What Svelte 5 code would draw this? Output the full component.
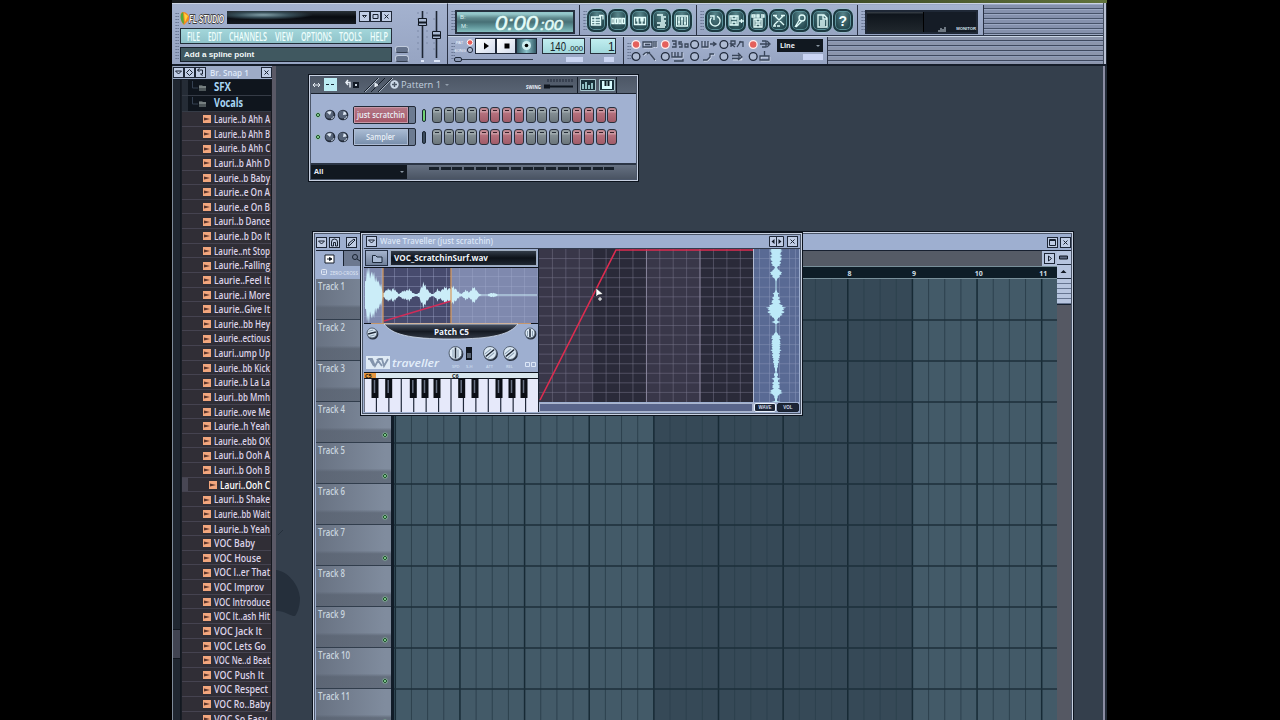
<script>
	const samples = [
		'Laurie..b Ahh A', 'Laurie..b Ahh B', 'Laurie..b Ahh C', 'Lauri..b Ahh D', 'Laurie..b Baby',
		'Laurie..e On A', 'Laurie..e On B', 'Lauri..b Dance', 'Laurie..b Do It', 'Laurie..nt Stop',
		'Laurie..Falling', 'Laurie..Feel It', 'Laurie..i More', 'Laurie..Give It', 'Laurie..bb Hey',
		'Laurie..ectious', 'Lauri..ump Up', 'Laurie..bb Kick', 'Laurie..b La La', 'Lauri..bb Mmh',
		'Laurie..ove Me', 'Laurie..h Yeah', 'Laurie..ebb OK', 'Lauri..b Ooh A', 'Lauri..b Ooh B',
		'Lauri..Ooh C', 'Lauri..b Shake', 'Laurie..bb Wait', 'Laurie..b Yeah', 'VOC Baby', 'VOC House',
		'VOC I..er That', 'VOC Improv', 'VOC Introduce', 'VOC It..ash Hit', 'VOC Jack It', 'VOC Lets Go',
		'VOC Ne..d Beat', 'VOC Push It', 'VOC Respect', 'VOC Ro..Baby', 'VOC So Easy'
	];
	const widths = { 'VOC Baby': 41, 'VOC House': 47, 'VOC Improv': 50, 'VOC Jack It': 48, 'VOC Lets Go': 52, 'VOC Push It': 50, 'VOC Respect': 54, 'VOC So Easy': 53, 'Lauri..Ooh C': 50 };
	const menu = [['FILE', 13], ['EDIT', 14], ['CHANNELS', 38], ['VIEW', 18], ['OPTIONS', 31], ['TOOLS', 23], ['HELP', 18]];
	const tracks = Array.from({ length: 11 }, (_, i) => i + 1);
	const channels = [
		{ name: 'just scratchin', w: 48, red: true },
		{ name: 'Sampler', w: 29, red: false }
	];
	const steps = Array.from({ length: 16 }, (_, i) => i);
	const blackKeys = [375, 388.7, 413.3, 425, 437, 461.7, 475, 499, 512, 524].map((x) => x - 364);

	const viewIcons = [
		'M4.500 6h9v8h-9ZM4.500 9h9M4.500 11.500h9M8 6v8M12 4.500h4v4',
		'M4 7.500h2v5H4ZM7.500 7.500h2v5h-2ZM11 7.500h2v5h-2ZM14.500 7.500h2v5h-2Z',
		'M4.500 6.500h11v7h-11ZM8 6.500v7M12 6.500v7M7 6.500v4M13 6.500v4M11 6.500v4',
		'M6 4h6M10 6h5M10 8h3M10 10h5M6 12h8M9 14h6M6 16h8',
		'M4.500 5h11v10h-11ZM7 6v8M10 6v8M13 6v8M6 11h2M9 8h2M12 12h2'
	];
	const fileIcons = [
		'M6.500 6.500A5 5 0 1 0 12 5.300M5 5h4v4',
		'M4 5h8v9H4ZM6 5v3h4V5M6 14v-3h4v3M13 10h5M15.500 8v4',
		'M4 4h3v2H4ZM9 4h2v2H9ZM13 4h3v2h-3M6 8h8v8H6ZM8 8v3h4V8M8 16v-3h4v3',
		'M5 4l10 10M15 4L5 14M4 4.500h4M12 4.500h4M4 15h3M8 15h3',
		'M12 4a3 3 0 1 1 0 6 3 3 0 0 1 0-6M10 8l-5 8M12 10l-6 6',
		'M6 4h6l3 3v9H6ZM11 4v4h4M8 10h5M8 12h5M8 14h5',
		''
	];

	// half heights, one per entry, spread evenly over the length
	const mainEnv = [14, 24, 27, 22, 25, 16, 19, 12, 10, 2, 4, 6, 6, 5, 7, 5, 3, 1, 3, 4, 5, 5, 6, 4, 2, 1, 1, 3, 8, 12, 10, 6, 3, 1, 1, 3, 6, 4, 5, 7, 8, 7, 7, 8, 9, 7, 4, 2, 1, 3, 5, 4, 3, 6, 8, 7, 3, 1, 0.6, 0.6, 0.6, 0.6, 2, 2, 2, 1.5, 0.6, 0.5, 0.5, 0.5, 0.5, 0.5, 0.5, 0.5, 0.5, 0.5, 0.5, 0.5, 0.5, 0.5, 0.5, 0.5, 0.5, 0.5, 0.5, 0.5, 0.5];
	const sideEnv = [6, 6, 5, 6, 5, 6, 5, 5, 4, 1, 2, 5, 6, 5, 3, 1, 0.5, 0.5, 0.5, 0.5, 0.5, 1, 3, 2, 4, 3, 5, 4, 7, 9, 8, 9, 7, 5, 3, 1, 4, 0.5, 0.5, 0.5, 0.5, 0.5, 2, 4, 5, 4, 5, 4, 5, 4, 5, 4, 4, 4, 3, 3, 3, 2, 2, 1, 1, 0.5, 3, 1, 4, 2, 4, 3, 4, 3, 6, 6, 3, 2, 1, 1, 8];
	const ripple = [1, 0.72, 1.12, 0.8, 1.05, 0.66, 0.95];

	function wave(env, mid, start, len, upright = false) {
		const fine = [];
		for (let i = 0; i < env.length - 1; i++) {
			for (const f of [0, 0.5]) {
				const v = env[i] + (env[i + 1] - env[i]) * f;
				fine.push(v > 1.5 ? v * ripple[fine.length % 7] : v);
			}
		}
		const pt = (v, t) => (upright ? `${(mid + v).toFixed(1)} ${t.toFixed(1)}` : `${t.toFixed(1)} ${(mid + v).toFixed(1)}`);
		const at = (i) => start + (i * len) / (fine.length - 1);
		const up = fine.map((v, i) => pt(-v, at(i)));
		const down = fine.map((v, i) => pt(v, at(i))).reverse();
		return 'M' + [...up, ...down].join('L') + 'Z';
	}
</script>

<!-- narrow lettering: set small, then stretched upwards by 1/k -->
{#snippet fit(text, w, size = 11, weight = 400, k = 0.7)}
	<svg class="fit" width={w + 1} height={size + 3}>
		<text x="0" y={(size - 0.5) * k} transform="scale(1 {1 / k})" textLength={w} lengthAdjust="spacingAndGlyphs" font-size={size * k} font-weight={weight} fill="currentColor">{text}</text>
	</svg>
{/snippet}

{#snippet knob(angle)}
	<svg class="knob" width="12" height="12" viewBox="-6 -6 12 12">
		<circle r="5.3" fill="#222b39" />
		<circle cx="-.5" cy="-.5" r="4" fill="#566378" />
		<path d="M-3 -2.500A4 4 0 0 1 1.500 -3.500L0 0Z" fill="#dde8f4" transform="rotate({angle})" />
		<path d="M1 4A4 4 0 0 0 4 1" fill="none" stroke="#c3d0e2" />
	</svg>
{/snippet}

{#snippet squareIcon(d)}
	<svg class="sq" width="11" height="11" viewBox="0 0 11 11"><path {d} /></svg>
{/snippet}

{#snippet bubble(d)}
	<div class="bubble">
		{#if d}<svg width="20" height="20" viewBox="0 0 20 20"><path {d} /></svg>{:else}<b>?</b>{/if}
	</div>
{/snippet}

<div class="screen">
	<div class="desktop">
		<header>
			<section class="title-panel">
				<div class="grip"></div>
				<div class="title-col">
					<div class="title-row">
						<svg class="brand" width="48" height="16" viewBox="0 0 48 16">
							<path d="M1 2C4-1 9 3 10 8L4 14C1 12 0 6 1 2Z" fill="#f28a1d" />
							<path d="M1 3l2-2 1 12C1 11 0 7 1 3Z" fill="#4faa3d" />
							<path d="M4 2l4 3-3 6Z" fill="#ffd23c" />
							<text x="9" y="7.800" transform="scale(1 1.500)" textLength="35" lengthAdjust="spacingAndGlyphs" class="logo">FL STUDIO</text>
						</svg>
						<div class="shine"></div>
						<div class="win-buttons">
							{@render squareIcon('M3.500 4.500h4L5.500 6.500Z')}
							{@render squareIcon('M3 3.500h5v4H3Z')}
							{@render squareIcon('M3.500 3.500l4 4M7.500 3.500l-4 4')}
						</div>
					</div>
					<nav>
						{#each menu as [m, w]}
							{@render fit(m, w, 12, 600, 0.58)}
						{/each}
					</nav>
					<div class="hint">Add a spline point</div>
				</div>
				<div class="mini-buttons"><i></i><i></i></div>
				<svg class="sliders" width="34" height="54" viewBox="0 0 34 54">
					<path d="M4 4h2M4 10h2M4 16h2M4 22h2M4 28h2M4 34h2M4 40h2M13 4h2M13 16h2M13 22h2M13 28h2M13 34h2M20 10h2M20 22h2M20 34h2M20 40h2" stroke="#7d8aa8" />
					<path d="M9.500 2v47M23.500 2v47" stroke="#1d2533" stroke-width="1.6" />
					<path d="M5.500 9.500h8v7h-8ZM19.500 22.500h8v7h-8Z" fill="#a9b8d2" stroke="#111823" />
					<path d="M6 13.500h7M20 26.500h7" stroke="#111823" stroke-width="2" />
					<path d="M8 52h3M21 52h6" stroke="#dfe8fa" stroke-width="2" />
				</svg>
			</section>

			<div class="bars">
				<div class="bar">
					<section class="time">
						<div class="grip"></div>
						<div class="clock">
							<svg width="116" height="20">
								<text x="3" y="7" class="tiny">B:</text><text x="4" y="16" class="tiny">M:</text>
								<text x="38" y="17.500" textLength="43" lengthAdjust="spacingAndGlyphs" class="digits" font-size="20">0:00</text>
								<text x="83" y="17.500" textLength="23" lengthAdjust="spacingAndGlyphs" class="digits" font-size="14">:00</text>
							</svg>
						</div>
					</section>
					<section class="views">
						<div class="grip"></div>
						{#each viewIcons as d}{@render bubble(d)}{/each}
					</section>
					<section class="files">
						<div class="grip"></div>
						{#each fileIcons as d}{@render bubble(d)}{/each}
					</section>
					<section class="monitor">
						<div class="grip"></div>
						<div class="scope">
							<div class="scope-left"></div>
							<div class="scope-right"><svg width="8" height="6"><path d="M1 6V4M3 6V2M5 6V3M7 6V1" stroke="#c8d4df" /></svg><span>MONITOR</span></div>
						</div>
					</section>
					<div class="stripes"></div>
				</div>
				<div class="bar">
					<section class="transport">
						<div class="grip"></div>
						<div class="transport-col">
							<div class="transport-row">
								<svg width="21" height="17" viewBox="0 0 21 17">
									<text x="2" y="6" class="micro">PAT</text><text x="0" y="14" class="micro">SONG</text>
									<circle cx="16" cy="4.500" r="2.800" fill="#e85d58" stroke="#fff" /><circle cx="16" cy="12" r="2.600" fill="#aebad0" stroke="#273043" />
								</svg>
								<div class="play"><svg width="20" height="14"><path d="M8 3.500l5 3.500-5 3.500Z" /></svg></div>
								<div class="play"><svg width="20" height="14"><path d="M7.500 4.500h5v5h-5Z" /></svg></div>
								<div class="play rec"><svg width="19" height="14"><circle cx="9.500" cy="6.500" r="4.500" fill="#cfeef0" /><circle cx="9.500" cy="6.500" r="1.800" /></svg></div>
								<div class="lcd tempo"><svg width="41" height="14"><text x="7" y="9" transform="scale(1 1.350)" textLength="16" lengthAdjust="spacingAndGlyphs" font-size="9.500">140</text><text x="25" y="12" textLength="15" lengthAdjust="spacingAndGlyphs" font-size="8">.000</text></svg></div>
								<div class="lcd pat"><svg width="24" height="14"><text x="17" y="12" font-size="12">1</text></svg></div>
							</div>
							<div class="shuttle"><i></i><b></b><em></em><em class="second"></em></div>
						</div>
					</section>
					<section class="modes">
						<div class="grip"></div>
						<svg width="148" height="27" viewBox="0 0 148 27">
							{#each [0, 1, 2, 3, 4] as c}
								{@const on = c < 2 || c === 4}
								<circle cx={6 + c * 29.300} cy="7.500" r="3.900" fill={on ? '#e4605c' : '#aebbd3'} stroke={on ? '#fff0f0' : '#202a3c'} stroke-width="1.300" />
								<circle cx={6 + c * 29.300} cy="19.500" r="3.900" fill="#aebbd3" stroke="#202a3c" stroke-width="1.300" />
							{/each}
							<g fill="none" stroke="#e3ebf8" transform="translate(.8 .9)">
								<path d="M13 5h9v5h-9ZM24 4v6M26 4v6M13 18c3-4 6-3 8 0l4 5M42 15v5h10v-5M72 4v6h6V4M73 23h4l3-3v-3h4M102 18h9v4h-9M130 23h9v-4h-9Z" />
							</g>
							<g fill="none" stroke="#394559" stroke-width="1.300">
								<path d="M13 5h9v5h-9ZM24 4v6M26 4v6M15 7.500h5" />
								<path d="M13 18c3-4 6-3 8 0l4 5M17 17l3-2" />
								<path d="M42 4h4v6h-4M46 7h-3M52 5h-3v2h3v3h-3M55 7v3h3V7Z" />
								<path d="M42 15v5h10v-5M45 15v5M48 15v5M44 24h9v-2" />
								<path d="M72 4v6h6V4M75 4v6M80 7h6M83 5l3 2-3 2" />
								<path d="M73 23h4l3-3v-3h4" />
								<path d="M101 10V4h4v3h-4l4 3M107 10l4-6M109 5h4v5" />
								<path d="M102 18.500h7v3h-7M108 16l4 4-4 3" />
								<path d="M130 7h9M132 4h4v6h-4M137 4l3 3-3 3" />
								<path d="M130 23h9v-4h-9ZM134.500 19v-5" />
							</g>
						</svg>
						<div class="line-col">
							<div class="line-select">Line<i class="caret"></i></div>
							<em></em>
						</div>
					</section>
					<div class="stripes lower"></div>
				</div>
			</div>
			<div class="edge"></div>
		</header>

		<div class="work">
			<aside>
				<div class="browser-head">
					{@render squareIcon('M2.500 4h6L5.500 7Z')}
					{@render squareIcon('M5.500 2.500l3 3-3 3-3-3Z')}
					{@render squareIcon('M2.500 3h5v4h-2l2 1.500M4.500 1.500L2.500 3l2 2')}
					<span>Br. Snap 1</span>
					{@render squareIcon('M3.500 3.500l4 4M7.500 3.500l-4 4')}
				</div>
				<div class="browser-body">
					<div class="scroll"><div class="thumb"></div></div>
					<div class="browser">
						{#each ['SFX', 'Vocals'] as folder}
							<div class="folder">
								<svg width="24" height="14" viewBox="0 0 24 14"><path d="M8.500 0v7H14" fill="none" stroke="#344051" /><path d="M15 4h3l1 1h3v5h-7Z" fill="#4d5659" /><path d="M15 6h7" stroke="#a0a8a8" /></svg>
								{@render fit(folder, folder === 'SFX' ? 17 : 29, 11.5, 700)}
							</div>
						{/each}
						{#each samples as s}
							<div class="sample" class:active={s === 'Lauri..Ooh C'}>
								<svg width="8" height="8" viewBox="0 0 8 8"><path d="M0 0h8v8H0Z" fill="#f2a67d" /><path d="M1 2.500L7 4 1 5.500Z" fill="#59342c" /></svg>
								{@render fit(s, widths[s] ?? 56, 11.5, 600)}
							</div>
						{/each}
					</div>
				</div>
			</aside>

			<svg class="blob" width="26" height="90" viewBox="0 0 26 90"><path d="M0 46C11 47 23 60 24 74c0 9-3 16-5 18-5 0-12-6-19-5Z" fill="#252f3b" /><path d="M2 11l5-5" stroke="#252f3b" /></svg>

			<div class="window rack">
				<div class="rack-head">
					<svg width="325" height="16" viewBox="0 0 325 16">
						<g fill="none" stroke="#e6edf5">
							<path d="M2 8h7M4 6L2 8l2 2M7 6l2 2-2 2" />
							<path d="M35 5.500h4v5M37 3l-2 2.500 2 2.500" stroke-width="1.500" />
							<path d="M53 15L67 1M60 15L74 1M67 15L81 1" stroke="#161e29" /><path d="M54 15L68 1M68 15L82 1" stroke="#aab6c5" />
							<path d="M64 6l3 2-3 2Z" fill="#e6edf5" />
						</g>
						<path d="M13 1h13v13H13Z" fill="#bcecf4" /><path d="M15 7.500h3M20 7.500h3" stroke="#142533" />
						<path d="M42 5h6v6h-6Z" fill="#111925" /><path d="M44 7h2v2h-2Z" fill="#c8d4df" />
						<circle cx="83.500" cy="7.500" r="4.200" fill="#cddae8" /><path d="M81 7.500h5M83.500 5v5" stroke="#4b5766" stroke-width="1.400" />
						<text x="90" y="11" textLength="40" lengthAdjust="spacingAndGlyphs" fill="#c2d0df" font-size="9.500">Pattern 1</text>
						<path d="M134 7h4l-2 2Z" fill="#93a0ae" />
						<text x="215" y="11.500" textLength="15" lengthAdjust="spacingAndGlyphs" font-size="5" font-weight="700" fill="#eef4fc">SWING</text>
						<path d="M235 9.500h27" stroke="#0f1620" stroke-width="2" /><path d="M237 2v3M240 2v3M243 2v3M246 2v3M249 2v3M252 2v3M255 2v3M258 2v3M261 2v3" stroke="#202938" /><path d="M233 7.500h6v4h-6Z" fill="#10161f" />
						<g stroke="#a6c5cd" stroke-width="1"><path d="M269.500 2.500h15v11h-15ZM288.500 2.500h15v11h-15Z" fill="#19303a" /></g>
						<path d="M272 12V7M275 12V5M278 12V8M281 12V6" stroke="#b9eef1" stroke-width="1.500" />
						<path d="M291 4h10v8H291Z" fill="#d8fbff" /><path d="M294.500 4v5M297.500 4v5" stroke="#0d1c25" stroke-width="2" />
						<path d="M266.500 0v16M305.500 0v16" stroke="#151d29" />
					</svg>
				</div>
				<div class="rack-body">
					{#each channels as ch}
						<div class="channel">
							<span class="led"></span>
							{@render knob(0)}
							{@render knob(60)}
							<div class="ch-name" class:red={ch.red}><span>{@render fit(ch.name, ch.w, 9.5, 600, 0.75)}</span><i></i></div>
							<span class="select" class:lit={ch.red}></span>
							<div class="steps">
								{#each steps as s}<i class:red={Math.floor(s / 4) % 2 === 1}></i>{/each}
							</div>
						</div>
					{/each}
				</div>
				<div class="rack-foot">
					<div class="filter">All<i class="caret"></i></div>
					<div class="ticks">{#each steps as s}<i></i>{/each}</div>
				</div>
			</div>

			<div class="window playlist">
				<div class="pl-head">
					{@render squareIcon('M2.500 4h6L5.500 7Z')}
					{@render squareIcon('M2.500 9V5a3 3 0 0 1 6 0v4h-2V5.500h-2V9Z')}
					<span class="gap"></span>
					{@render squareIcon('M2 9l1-3 5-4 1 1-5 5Z')}
					<span class="grow"></span>
					{@render squareIcon('M2.500 2.500h6v6h-6ZM2.500 3.500h6')}
					{@render squareIcon('M3.500 3.500l4 4M7.500 3.500l-4 4')}
				</div>
				<div class="pl-main">
					<div class="heads">
						<div class="tabs">
							<div class="tab"><svg width="12" height="10"><path d="M1 1h9v8H1Z" fill="#fff" stroke="#141c28" /><path d="M3 5h3M5.500 3.500L8 5 5.500 6.500Z" stroke="#141c28" /></svg></div>
							<div class="tab off"><svg width="14" height="12"><circle cx="4" cy="4" r="2.500" fill="none" stroke="#182230" /><path d="M6 6l3 2 3 2" stroke="#182230" fill="none" /></svg></div>
						</div>
						<div class="zero"><svg width="42" height="10"><rect x="2.500" y="1.500" width="5" height="5" rx="1" fill="none" stroke="#e2e9f5" /><path d="M4 4h2" stroke="#e2e9f5" /><text x="11" y="6.500" textLength="28" lengthAdjust="spacingAndGlyphs" font-size="5" fill="#e2e9f5">ZERO-CROSS</text></svg></div>
						{#each tracks as t}
							<div class="track">{@render fit('Track ' + t, t > 9 ? 32 : 27, 11, 600)}<span class="led"></span></div>
						{/each}
					</div>
					<div class="arrange">
						<div class="hscroll"><div>{@render squareIcon('M4.500 3l3 2.500-3 2.500Z')}</div></div>
						<div class="ruler">
							<svg width="665" height="12">
								{#each [8, 9, 10, 11] as b, i}
									<text x={455.500 + i * 64.600} y="9" text-anchor="middle">{b}</text>
								{/each}
							</svg>
						</div>
						<div class="grid">
							<svg width="665" height="460">
								<path d="M260 0h259v460H260Z" fill="#364957" />
								{#each Array(41) as _, i}
									<path d="M{1.300 + i * 16.160} 0V460" stroke={i % 4 ? '#2d414e' : '#172a35'} stroke-width={i % 4 ? 1 : 1.500} />
								{/each}
								{#each tracks as t}<path d="M0 {t * 41}H665" stroke="#1c2f3a" stroke-width="1.700" />{/each}
							</svg>
						</div>
					</div>
					<div class="vscroll">
						<div class="vbtn"><svg width="13" height="13"><path d="M2.500 5h8v3h-8Z" fill="#5c6880" stroke="#121925" /></svg></div>
						<div class="vbtn"><svg width="13" height="13"><path d="M3.500 8h6L6.500 5Z" fill="#121925" /></svg></div>
						<div class="vthumb"></div>
					</div>
				</div>
			</div>

			<div class="window traveller">
				<div class="wt-head">
					{@render squareIcon('M2.500 4h6L5.500 7Z')}
					{@render fit('Wave Traveller (just scratchin)', 113, 9.5, 600, 0.75)}
					<span class="grow"></span>
					<svg class="pair" width="15" height="11"><path d="M.5.500h7v10h-7ZM7.500.500h7v10h-7Z" fill="#c0cde5" stroke="#1e2737" /><path d="M5.500 3v5L2.500 5.500ZM9.500 3v5l3-2.500Z" fill="#111925" /></svg>
					{@render squareIcon('M3.500 3.500l4 4M7.500 3.500l-4 4')}
				</div>
				<div class="wt-main">
					<div class="wt-left">
						<div class="file">
							<div class="folder-btn"><svg width="14" height="11"><path d="M2.500 9.500v-7h3l1.500 1.500h5v5.500Z" fill="#a9bad4" stroke="#1d2a3c" /></svg></div>
							<div class="file-name">{@render fit('VOC_ScratchinSurf.wav', 94, 8.5, 700, 0.95)}</div>
						</div>
						<svg class="view" width="174" height="56" viewBox="0 0 174 56">
							<path d="M0 0h174v56H0Z" fill="#7f89ae" /><path d="M19 0h68v56H19Z" fill="#474b6e" />
							<g stroke="#a0a9cb" stroke-opacity=".38">{#each Array(14) as _, i}<path d="M{i * 13 + 4.500} 0v56" />{/each}{#each [9, 19, 29, 39, 49] as y}<path d="M0 {y}.500h174" />{/each}</g>
							<path d={wave(mainEnv, 28, 1, 172)} fill="#cbedf8" />
							<path d="M20 54L87 34" stroke="#d02c58" stroke-width="1.400" /><path d="M19 0v56M87 0v56" stroke="#d99a5a" stroke-width="1.200" />
							<path d="M0 .5h174" stroke="#0d121c" />
						</svg>
						<svg width="174" height="49" viewBox="0 0 174 49">
							<defs>
								<linearGradient id="lip" x1="0" y1="0" x2="0" y2="1"><stop offset="0" stop-color="#4b5566" /><stop offset=".5" stop-color="#151a23" /><stop offset="1" stop-color="#343b48" /></linearGradient>
							</defs>
							<path d="M0 0h174v1H0Z" fill="#101620" /><path d="M7 .5h160" stroke="#c6976c" />
							<path d="M20 1h134C146 11 130 16 87 16S28 11 20 1Z" fill="url(#lip)" stroke="#e3edfb" stroke-width=".7" />
							<text x="70" y="11.500" textLength="35" lengthAdjust="spacingAndGlyphs" font-size="8.500" font-weight="700" fill="#eef5ff">Patch C5</text>
							{#each [[8, 10, 5, 75], [166, 10, 5, 0], [91.500, 30, 6.500, 0], [126, 30, 6.500, 50], [146, 30, 6.500, 50]] as [x, y, r, a]}
								<circle cx={x + 0.800} cy={y + 1} r={r + 0.600} fill="#28313f" /><circle cx={x} cy={y} {r} fill="#dce9f5" stroke="#546274" />
								<path d="M{x} {y - r + 1}v{2 * r - 2}" stroke="#1f2937" stroke-width="1.500" transform="rotate({a} {x} {y})" />
								<path d="M{x - 2.500} {y - r + 3}v{2 * r - 5}M{x + 2.500} {y - r + 3}v{2 * r - 5}" stroke="#8ba0b2" transform="rotate({a} {x} {y})" />
							{/each}
							<path d="M102 24h6v13h-6Z" fill="#0f151e" /><path d="M103 30h4v5h-4Z" fill="#566170" />
							<path d="M2 33h24v13H2Z" fill="#dfeaf5" />
							<path d="M4 36h4l3 7 4-7h3l2 7 4-7M6 36l4 7M13 36l5 7" stroke="#8495ad" stroke-width="1.800" fill="none" />
							<text x="28" y="44" textLength="47" lengthAdjust="spacingAndGlyphs" font-size="11" font-style="italic" font-weight="600" fill="#e3eefa">traveller</text>
							<g font-size="4" fill="#dce7f7"><text x="88" y="44.500">SPD</text><text x="102" y="44.500">S-H</text><text x="122" y="44.500">ATT</text><text x="142" y="44.500">REL</text></g>
							<path d="M161.500 39.500h4v4h-4ZM167.500 39.500h4v4h-4Z" fill="none" stroke="#dce7f7" />
						</svg>
						<svg width="174" height="40" viewBox="0 0 174 40">
							<path d="M0 0h174v40H0Z" fill="#e6e9fa" /><path d="M0 1h174v5H0Z" fill="#d8e6ee" /><path d="M0 1h12v5H0Z" fill="#e4963f" />
							<path d="M0 .5h174M0 6.500h174" stroke="#0f151f" />
							<text x="1" y="5.800" font-size="5.500" font-weight="700" fill="#24180e">C5</text><text x="88" y="5.800" font-size="5.500" font-weight="700" fill="#111925">C6</text>
							{#each Array(14) as _, i}<path d="M{i * 12.430} 6v34" stroke="#20283a" stroke-width="1.200" />{/each}
							{#each blackKeys as x}<path d="M{x - 3.500} 6h7v20h-7Z" fill="#0b0e15" /><path d="M{x - 0.500} 8v13" stroke="#687183" stroke-width="1.500" />{/each}
						</svg>
					</div>
					<div class="editor">
						<svg width="214" height="153" viewBox="0 0 214 153">
							<path d="M0 0h215v154H0Z" fill="#393749" /><path d="M53.500 0h53.500v154H53.500ZM161 0h54v154H161Z" fill="#2a2a39" />
							<g stroke="#77758c" stroke-opacity=".5">
								{#each Array(15) as _, i}<path d="M{(i + 1) * 13.420} 0v154" />{/each}
								{#each Array(15) as _, i}<path d="M0 {(i + 1) * 9.560}H215" />{/each}
							</g>
							<path d="M107.500 0v154M161 0v154" stroke="#918da5" stroke-opacity=".8" />
							<path d="M1 151L77 1H214" fill="none" stroke="#dd2c50" stroke-width="1.600" />
						</svg>
						<div class="hbar"></div>
					</div>
					<div class="side">
						<svg width="45" height="153" viewBox="0 0 45 153">
							<path d="M0 0h45v154H0Z" fill="#596a94" />
							<g stroke="#8794b7" stroke-opacity=".5"><path d="M5.500 0v154M15.500 0v154M25.500 0v154M35.500 0v154M41.500 0v154" />{#each Array(15) as _, i}<path d="M0 {(i + 1) * 9.560}H45" />{/each}</g>
							<path d={wave(sideEnv, 22, 0, 153, true)} fill="#bce9f8" />
						</svg>
						<div class="side-tabs"><span class="on">WAVE</span><span>VOL</span></div>
					</div>
				</div>
				<svg class="cursor" width="12" height="16"><path d="M1 1v9l2-2 3-.500 2-.500Z" fill="#fff" stroke="#1d1d28" stroke-width=".6" /><path d="M3 12h4M5 10v4" stroke="#fff" /></svg>
			</div>
		</div>
	</div>
</div>

<style>
	:global(body) {
		background: #000;
		overflow: hidden;
	}
	.screen {
		width: 1280px;
		height: 720px;
		overflow: hidden;
		background: #000;
		font-family: 'Open Sans', 'Noto Sans', sans-serif;
	}
	.screen svg {
		display: block;
		flex-shrink: 0;
	}
	.screen .fit,
	.brand,
	.clock svg,
	.lcd svg {
		overflow: visible;
	}
	.desktop {
		width: 935px;
		height: 720px;
		margin-left: 172px;
		background: #343f4c;
		display: flex;
		flex-direction: column;
	}
	.grow {
		flex: 1;
	}
	.gap {
		width: 2px;
	}
	.caret {
		width: 0;
		height: 0;
		align-self: center;
		border: 2px solid transparent;
		border-top-color: #8c98a4;
		border-bottom: 0;
	}

	header {
		height: 66px;
		display: flex;
		box-sizing: border-box;
		padding-top: 3px;
		border-bottom: 2px solid #151d29;
		background: linear-gradient(90deg, #171b1e 30%, #303b20 60%, #60723b) 0 0 / 100% 3px no-repeat, #9aa8c6;
		flex-shrink: 0;
	}
	header section {
		display: flex;
		box-sizing: border-box;
		border-right: 1px solid #293144;
		background: linear-gradient(#a4b2cf, #96a4c2);
	}
	.grip {
		width: 4px;
		margin: 5px 2px 3px 3px;
		background: radial-gradient(circle, #64728f 0.7px, transparent 1px) 0 0 / 2.5px 3px;
		flex-shrink: 0;
	}
	.title-panel {
		width: 276px;
		padding-top: 3px;
		border-top: 1px solid #cbd4e4;
	}
	.title-col {
		width: 212px;
		margin-left: -1px;
		display: flex;
		flex-direction: column;
	}
	.title-row {
		display: flex;
		height: 21px;
		padding-top: 4px;
		box-sizing: border-box;
	}
	.logo {
		font: italic 700 7.4px 'Liberation Sans', sans-serif;
		fill: #fff;
		stroke: #251d18;
		stroke-width: 1px;
		paint-order: stroke;
	}
	.shine {
		width: 131px;
		height: 13px;
		margin-left: -1px;
		background: radial-gradient(ellipse at 28% 30%, #829fa8 0, #374e58 20%, transparent 38%), linear-gradient(#293138, #080b10 45%, #151b21);
	}
	.win-buttons {
		display: flex;
		margin-left: 3px;
	}
	.sq {
		background: #c0cde5;
		outline: 1px solid #1e2737;
		outline-offset: -1px;
	}
	.sq path {
		fill: none;
		stroke: #182130;
	}
	nav {
		height: 16px;
		box-sizing: border-box;
		border: 1px solid #232e3a;
		background: linear-gradient(#a3d6da, #8fc3ca);
		display: flex;
		align-items: center;
		justify-content: space-between;
		padding: 0 2px 0 6px;
		color: #effffd;
	}
	.hint {
		height: 15px;
		box-sizing: border-box;
		margin-top: 3px;
		border: 1px solid #151e2a;
		background: #405860;
		color: #f1f7f7;
		font: 700 8.1px/13px 'Liberation Sans', sans-serif;
		padding-left: 3px;
	}
	.mini-buttons {
		width: 14px;
		margin: 39px 0 0 3px;
		display: flex;
		flex-direction: column;
		gap: 2px;
	}
	.mini-buttons i {
		height: 7px;
		border-radius: 3px;
		background: #65738c;
		border: 1px solid #c1ccdd;
		border-bottom-color: #343e50;
		box-sizing: border-box;
	}
	.sliders {
		margin: 2px 0 0 4px;
	}
	.bars {
		flex: 1;
		display: flex;
		flex-direction: column;
		border-top: 1px solid #cbd4e4;
	}
	.bar {
		display: flex;
		height: 32px;
		border-bottom: 1px solid #2b3548;
		padding-top: 1px;
		box-sizing: border-box;
	}
	.bar + .bar {
		height: 28px;
		border: 0;
		border-top: 1px solid #c8d4e5;
		padding: 0;
	}
	.time {
		width: 132px;
	}
	.clock {
		width: 120px;
		height: 24px;
		margin: 5px 0 0 -2px;
		box-sizing: border-box;
		border: 2px solid #26313f;
		background: linear-gradient(#94c7ca 0 10%, #5f898d 30%, #477076 50%, #61979b 75%, #86bfc0);
	}
	.tiny {
		font: 6px 'Liberation Sans', sans-serif;
		fill: #d9f3f2;
	}
	.digits {
		font-family: 'Liberation Sans', sans-serif;
		font-style: italic;
		fill: #e4fcf8;
		stroke: #e4fcf8;
		stroke-width: 0.5px;
	}
	.views {
		width: 117px;
	}
	.files {
		width: 161px;
	}
	.views .grip {
		margin-right: 0;
	}
	.files .grip {
		margin-right: 1px;
	}
	.bubble {
		width: 20.200px;
		height: 23px;
		margin: 4px 1.100px 0 0;
		box-sizing: border-box;
		border: 2px solid #1c3941;
		border-radius: 7px;
		background: radial-gradient(ellipse at 50% 20%, #59868c, #264a51 70%);
		box-shadow: inset 0 0 0 1px #5b9199, 0 0 0 0.5px #99cbd0;
		display: grid;
		place-items: center;
		flex-shrink: 0;
	}
	.bubble svg {
		margin: -2px;
	}
	.bubble path {
		fill: none;
		stroke: #e1fcfa;
		stroke-width: 1.35;
	}
	.bubble b {
		font: 700 14px 'Liberation Sans', sans-serif;
		color: #f3ffff;
	}
	.monitor {
		width: 126px;
	}
	.scope {
		width: 113px;
		height: 24px;
		margin: 5px 0 0 -2px;
		box-sizing: border-box;
		border: 2px solid #1f2836;
		background: #151c26;
		display: flex;
	}
	.scope-left {
		width: 56px;
		background: linear-gradient(#394149, #0f151c 12%, #20272d);
		border-right: 1px solid #000;
	}
	.scope-right {
		flex: 1;
		display: flex;
		align-items: flex-end;
		justify-content: space-between;
		padding-left: 14px;
		font: 700 4.2px/6px 'Liberation Sans', sans-serif;
		color: #d6e1ee;
	}
	.stripes {
		flex: 1;
		background: repeating-linear-gradient(#8591ad 0 3px, #465269 3px 4px, #9ba8c3 4px 5px);
	}
	.lower {
		background: repeating-linear-gradient(#8b95ac 0 3px, #3f495f 3px 4px, #909db8 4px 5px);
	}
	.edge {
		width: 4px;
		background: linear-gradient(90deg, #414a5c 1px, #b8c0d2 1px 3px, #1a2029 3px);
	}
	.transport {
		width: 176px;
	}
	.transport-col {
		margin-left: -3px;
		padding-top: 1px;
	}
	.transport-row {
		display: flex;
	}
	.micro {
		font: 4px 'Liberation Sans', sans-serif;
		fill: #f0f6ff;
	}
	.play {
		width: 20.5px;
		height: 16px;
		box-sizing: border-box;
		border: 1px solid #1f2838;
		background: linear-gradient(135deg, #fff, #d3dced);
		overflow: hidden;
	}
	.rec {
		background: linear-gradient(90deg, #345c68, #8cc3cb, #345c68);
	}
	.lcd {
		height: 16px;
		box-sizing: border-box;
		border: 1px solid #27313d;
		background: linear-gradient(#c1eef0, #a2d8dc);
		margin-left: 5px;
		font-family: 'Liberation Sans', sans-serif;
		fill: #15222a;
	}
	.tempo {
		width: 43px;
	}
	.pat {
		width: 26px;
	}
	.shuttle {
		display: flex;
		align-items: center;
		height: 6px;
		margin-top: 1px;
	}
	.shuttle i {
		width: 6px;
		height: 3px;
		border: 1px solid #202a3a;
		background: #8c9ab5;
		border-radius: 2px;
	}
	.shuttle b {
		width: 71px;
		height: 1px;
		background: #323d50;
	}
	.shuttle em {
		width: 17px;
		height: 5px;
		margin-left: 33px;
		background: #cad5f2;
	}
	.shuttle .second {
		width: 10px;
		margin-left: 21px;
	}
	.modes {
		width: 204px;
	}
	.modes .grip {
		margin-right: -1px;
	}
	.line-col {
		margin: 2px 0 0 -1px;
		width: 46px;
		display: flex;
		flex-direction: column;
		align-items: flex-end;
	}
	.line-select {
		width: 46px;
		height: 13px;
		box-sizing: border-box;
		background: #111820;
		color: #e4eaf0;
		font: 700 7px/13px 'Open Sans', sans-serif;
		padding: 0 3px;
		display: flex;
		justify-content: space-between;
	}
	.line-col em {
		width: 20px;
		height: 6px;
		margin-top: 2px;
		background: #cad5f4;
	}

	.work {
		position: relative;
		flex: 1;
		overflow: hidden;
		background: linear-gradient(90deg, transparent 931px, #8a8ca2 931px 933px, #222a36 933px);
	}
	aside {
		width: 104px;
		height: 654px;
		display: flex;
		flex-direction: column;
		box-sizing: border-box;
		overflow: hidden;
		border-left: 1px solid #7e8a99;
		border-right: 4px solid #5a5966;
		background: #302e36;
	}
	.browser-body {
		flex: 1;
		display: flex;
		min-height: 0;
	}
	.scroll {
		width: 8px;
		background: #202731;
		border-right: 1px solid #121820;
		padding-top: 549px;
		box-sizing: border-box;
	}
	.thumb {
		height: 28px;
		background: #414452;
		border-top: 1px solid #11161e;
		border-bottom: 1px solid #11161e;
	}
	.browser {
		flex: 1;
		border-left: 1px solid #181d25;
		border-right: 1px solid #15181f;
		overflow: hidden;
	}
	.browser-head {
		height: 14px;
		flex-shrink: 0;
		display: flex;
		align-items: center;
		background: #9dabc7;
		color: #dfe9f9;
		border-bottom: 1px solid #141c27;
		box-sizing: border-box;
	}
	.browser-head span {
		flex: 1;
		padding-left: 4px;
		font-size: 8px;
		font-weight: 600;
		line-height: 12px;
		white-space: nowrap;
	}
	.folder {
		height: 16px;
		box-sizing: border-box;
		display: flex;
		align-items: center;
		gap: 6px;
		padding-left: 2px;
		border-bottom: 1px solid #353b46;
		background: linear-gradient(90deg, #252c36 6px, #0f151d 6px);
		color: #a8d6f4;
	}
	.sample {
		height: 14.640px;
		box-sizing: border-box;
		display: flex;
		align-items: center;
		gap: 3px;
		padding: 1px 0 0 21px;
		border-bottom: 1px solid #454350;
		color: #dcd3e8;
	}
	.active {
		padding-left: 27px;
		color: #fff;
		background: linear-gradient(90deg, #484754 6px, transparent 6px);
	}
	.blob {
		position: absolute;
		left: 104px;
		top: 458px;
		overflow: visible;
	}

	.window {
		position: absolute;
		box-sizing: border-box;
		border: 1px solid #0c131d;
		background: #9eafd0;
		box-shadow: inset 0 0 0 1px #c8d1e1, inset 0 0 0 2px #4b5669;
	}
	.rack {
		left: 136px;
		top: 8px;
		width: 331px;
		height: 108px;
		padding: 2px;
		display: flex;
		flex-direction: column;
	}
	.rack-head {
		height: 17px;
		box-sizing: border-box;
		background: linear-gradient(#4d5766, #596474);
		border-bottom: 1px solid #1a222e;
	}
	.rack-body {
		flex: 1;
		padding: 12px 0 0 5px;
		display: flex;
		flex-direction: column;
		gap: 4px;
		background: #a1b1d1;
	}
	.channel {
		height: 18px;
		display: flex;
		align-items: center;
	}
	.led {
		width: 2px;
		height: 2px;
		border: 1.5px solid #123a1f;
		border-radius: 50%;
		background: #a5ffb0;
		box-shadow: 0 0 1px 0.5px #8cc79c;
	}
	.channel .knob {
		margin-left: 1px;
	}
	.channel .led {
		margin-right: 3px;
	}
	.ch-name {
		width: 63px;
		height: 18px;
		margin-left: 4px;
		box-sizing: border-box;
		border: 1px solid #222a38;
		border-radius: 2px;
		display: flex;
		background: #6c7b91;
		color: #e9f0f7;
	}
	.ch-name > span {
		width: 54px;
		box-sizing: border-box;
		display: flex;
		align-items: center;
		justify-content: center;
		border: 1px solid #adbbd3;
		background: linear-gradient(#a8bad2, #7a90ad);
	}
	.ch-name.red > span {
		border-color: #c897a6;
		background: linear-gradient(#b37685, #a65869);
	}
	.ch-name i {
		flex: 1;
		border-left: 1px solid #222a38;
	}
	.select {
		width: 2px;
		height: 11px;
		margin: 0 6px 0 6px;
		border: 1px solid #192532;
		border-radius: 2px;
		background: #3b4b5c;
	}
	.select.lit {
		background: #6fd174;
	}
	.steps {
		display: flex;
		gap: 1.700px;
	}
	.steps i {
		width: 10px;
		height: 16px;
		box-sizing: border-box;
		border: 1px solid #29303c;
		border-radius: 3px;
		background: linear-gradient(#242c36, #242c36) 50% 2px / 4px 1px no-repeat, linear-gradient(#8d989d, #a0abae 4px, #838e93 5px, #6c777c);
	}
	.steps i.red {
		background: linear-gradient(#3a2029, #3a2029) 50% 2px / 4px 1px no-repeat, linear-gradient(#b8808a, #cc9aa3 4px, #b5717d 5px, #a15c69);
	}
	.rack-foot {
		height: 16px;
		box-sizing: border-box;
		border-top: 2px solid #2b3545;
		display: flex;
		background: linear-gradient(#667182, #4a5463);
	}
	.filter {
		width: 96px;
		box-sizing: border-box;
		background: #111820;
		color: #e7edf4;
		font-size: 7.2px;
		font-weight: 700;
		line-height: 12px;
		padding: 0 3px;
		display: flex;
		justify-content: space-between;
	}
	.ticks {
		display: flex;
		gap: 1.700px;
		padding: 2px 0 0 22px;
	}
	.ticks i {
		width: 10px;
		height: 3px;
		background: #17202b;
	}

	.playlist {
		left: 140px;
		top: 165px;
		width: 762px;
		height: 500px;
		padding: 3px 2px 3px 3px;
	}
	.pl-head {
		height: 15px;
		display: flex;
		align-items: center;
		gap: 2px;
	}
	.pl-main {
		display: flex;
		border-top: 1px solid #172030;
	}
	.heads {
		width: 75px;
		flex-shrink: 0;
		border-right: 3px solid #111c28;
	}
	.tabs {
		display: flex;
		height: 15px;
	}
	.tab {
		width: 27px;
		display: grid;
		place-items: center;
	}
	.off {
		background: #6c788f;
		border-left: 1px solid #182130;
	}
	.zero {
		height: 13px;
		padding: 2px 0 0 3px;
		box-sizing: border-box;
	}
	.track {
		height: 41px;
		box-sizing: border-box;
		display: flex;
		justify-content: space-between;
		padding: 0 4px 5px 2px;
		background: linear-gradient(rgba(90, 98, 112, 0) 64%, rgba(86, 95, 109, 0.65) 72%), linear-gradient(90deg, #687282, #808c9e 92%);
		border-bottom: 1px solid #313d4c;
		color: #c8d4df;
	}
	.track .led {
		align-self: flex-end;
	}
	.arrange {
		width: 664px;
		overflow: hidden;
	}
	.hscroll {
		height: 15px;
		box-sizing: border-box;
		background: #555b66;
		display: flex;
		justify-content: flex-end;
		align-items: center;
	}
	.hscroll div {
		height: 15px;
		width: 15px;
		background: #b0bfd9;
		display: grid;
		place-items: center;
	}
	.ruler {
		height: 13px;
		box-sizing: border-box;
		background: #0e1d27;
		border-top: 1px solid #79909a;
		border-bottom: 1px solid #79909a;
	}
	.ruler text {
		font: 700 7px 'Open Sans', sans-serif;
		fill: #cfdee5;
	}
	.grid {
		background: #435a68;
	}
	.vscroll {
		width: 14px;
		background: #555863;
	}
	.vbtn {
		height: 13px;
		background: #b7c5df;
		border-bottom: 1px solid #243043;
	}
	.vthumb {
		height: 25px;
		background: repeating-linear-gradient(#b7c5df 0 4px, #667591 4px 5px);
		border-bottom: 1px solid #15202f;
	}

	.traveller {
		left: 188px;
		top: 166px;
		width: 443px;
		height: 184px;
		padding: 2px 2px 2px 3px;
	}
	.wt-head {
		height: 13px;
		display: flex;
		align-items: center;
		gap: 3px;
		padding: 0 2px;
		color: #dbe6f7;
	}
	.wt-main {
		display: flex;
		border-top: 1px solid #323b4c;
	}
	.wt-left {
		width: 174px;
		border-right: 1px solid #182130;
		flex-shrink: 0;
	}
	.file {
		height: 18px;
		display: flex;
		gap: 2px;
		padding: 1px;
		box-sizing: border-box;
	}
	.folder-btn {
		width: 23px;
		border: 1px solid #243044;
		background: linear-gradient(#a5b4cd, #70809a);
		display: grid;
		place-items: center;
		box-sizing: border-box;
	}
	.file-name {
		flex: 1;
		box-sizing: border-box;
		border: 1px solid #9daabc;
		background: linear-gradient(#333c48, #0c1118 50%, #1f2733);
		display: flex;
		align-items: center;
		padding: 1px 0 0 3px;
		color: #f0f5fa;
	}
	.editor {
		width: 214px;
	}
	.hbar {
		height: 9px;
		border: 1px solid #aab5cd;
		background: #59658b;
		box-sizing: border-box;
		margin-top: 1px;
	}
	.side {
		width: 45px;
		border-left: 1px solid #b1bad2;
	}
	.side-tabs {
		display: flex;
		gap: 1px;
		margin-top: 1px;
	}
	.side-tabs span {
		flex: 1;
		height: 9px;
		box-sizing: border-box;
		border: 1px solid #18202e;
		border-radius: 2px;
		background: #1c2536;
		color: #d1dcec;
		text-align: center;
		font: 700 4.5px/7px 'Liberation Sans', sans-serif;
	}
	.side-tabs .on {
		border-color: #eaf2fd;
	}
	.cursor {
		position: absolute;
		left: 234px;
		top: 54px;
	}
</style>
